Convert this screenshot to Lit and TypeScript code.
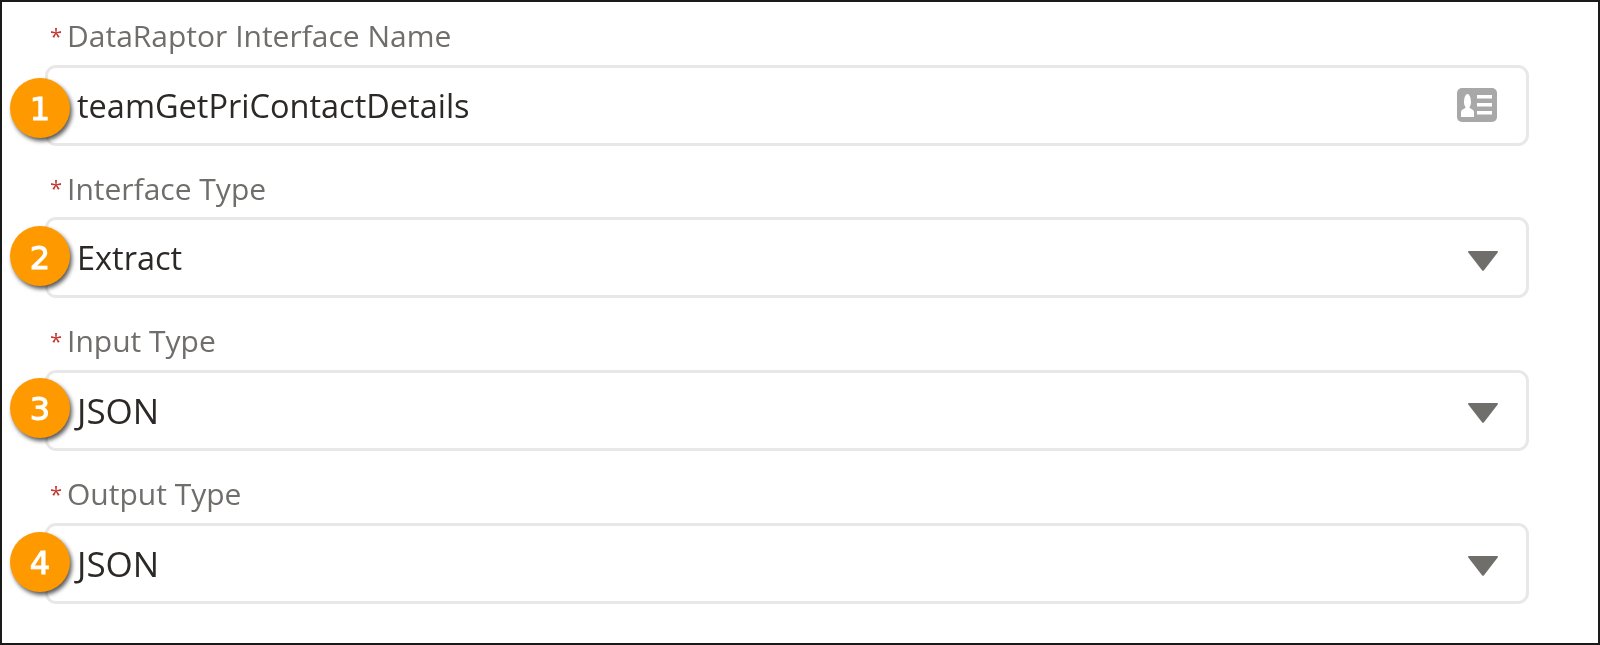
import { LitElement, html, css, svg } from "lit";
import { customElement } from "lit/decorators.js";
import { classMap } from "lit/directives/class-map.js";
import { styleMap } from "lit/directives/style-map.js";

const contactIcon = html`<svg class="icon" width="40" height="34" viewBox="0 0 40 34">
  <rect width="40" height="34" rx="5" fill="#a8a8a8"></rect>
  ${svg`<path fill="#fff" d="M4 29v-5c0-1.800 1.500-2.800 3.500-3.600 1-.4 1.200-1 .7-1.800-.8-1.200-1.200-2.600-1.200-4.100C7 10.500 8.200 6 10.500 6s3.500 4.500 3.500 8.500c0 1.500-.4 2.900-1.200 4.100-.5.800-.3 1.400.7 1.800 2 .8 3.500 1.800 3.500 3.600v5z"></path>
  <rect x="20" y="7" width="15" height="3.500" fill="#fff"></rect>
  <rect x="20" y="15" width="15" height="3.500" fill="#fff"></rect>
  <rect x="20" y="23" width="15" height="3.500" fill="#fff"></rect>`}
</svg>`;

const arrowIcon = html`<svg class="icon arrow" width="30" height="20" viewBox="0 0 30 20">
  <path fill="#706e6b" d="M1 0h28c1 0 1.300.8.700 1.500L16 19.300c-.6.700-1.400.7-2 0L.3 1.500C-.3.800 0 0 1 0z"></path>
</svg>`;

const fields = [
  { n: "1", top: 10, label: "DataRaptor Interface Name", value: "teamGetPriContactDetails", caps: false, icon: contactIcon },
  { n: "2", top: 6, label: "Interface Type", value: "Extract", caps: false, icon: arrowIcon },
  { n: "3", top: 5, label: "Input Type", value: "JSON", caps: true, icon: arrowIcon },
  { n: "4", top: 6, label: "Output Type", value: "JSON", caps: true, icon: arrowIcon },
];

@customElement("app-root")
export class AppRoot extends LitElement {
  static styles = css`
    :host {
      display: block;
      width: 1600px;
      height: 645px;
      box-sizing: border-box;
      border: 2px solid #1a1a1a;
      background: #fff;
      font-family: "Open Sans", "Liberation Sans", sans-serif;
      overflow: hidden;
    }
    .form {
      display: flex;
      flex-direction: column;
      gap: 21.700px;
      padding: 12.500px 69px 0 43px;
      filter: blur(0.45px);
    }
    .label {
      display: flex;
      align-items: center;
      height: 42px;
      margin-bottom: 8px;
      font-size: 30px;
      color: #706e6b;
    }
    .star {
      width: 22px;
      align-self: flex-start;
      color: #c23934;
      font-size: 22px;
      line-height: 22px;
      padding: 9px 0 0 5px;
      box-sizing: border-box;
    }
    .box {
      position: relative;
      display: flex;
      align-items: center;
      justify-content: space-between;
      box-sizing: border-box;
      height: 81px;
      border: 3px solid #e9e8e7;
      border-radius: 11px;
      padding: 0 29px 0 29px;
      font-size: 32.500px;
      color: #2b2826;
    }
    .caps {
      font-size: 35px;
    }
    .badge {
      position: absolute;
      left: -38px;
      width: 60px;
      height: 60px;
      box-sizing: border-box;
      padding-top: 3px;
      border-radius: 50%;
      background: #ff9900;
      color: #fff;
      font-family: "DejaVu Sans", sans-serif;
      font-size: 32px;
      -webkit-text-stroke: 1px #fff;
      display: flex;
      align-items: center;
      justify-content: center;
      box-shadow: 2px 3px 4px rgba(0, 0, 0, 0.65);
    }
    .icon {
      display: block;
    }
    .arrow {
      margin-right: -1px;
      margin-top: 6px;
    }
  `;

  render() {
    return html`<div class="form">
      ${fields.map(
        (f) => html`<div class="field">
          <div class="label"><span class="star">*</span>${f.label}</div>
          <div class="box">
            <span class="badge" style=${styleMap({ top: `${f.top}px` })}>${f.n}</span>
            <span class=${classMap({ caps: f.caps })}>${f.value}</span>
            ${f.icon}
          </div>
        </div>`
      )}
    </div>`;
  }
}
